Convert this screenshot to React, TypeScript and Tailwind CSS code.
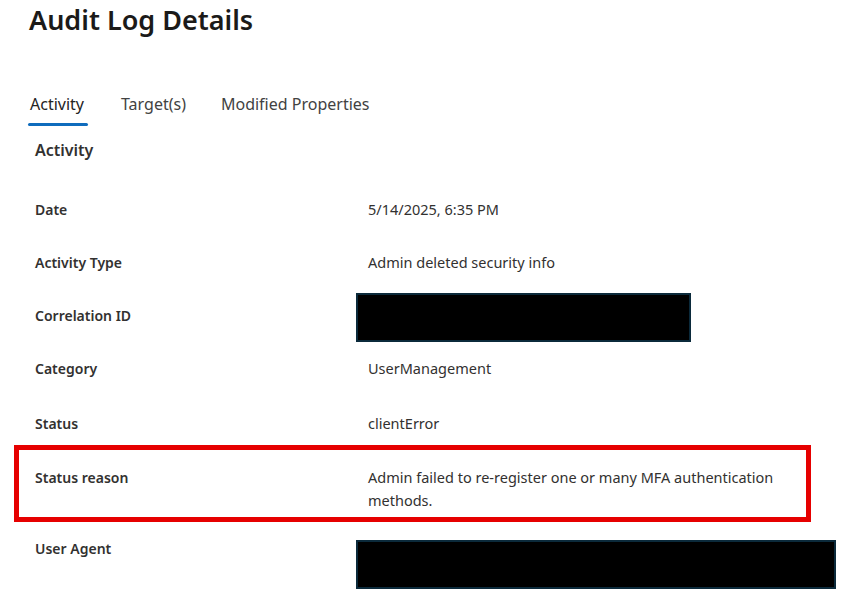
import React from 'react';

const rows: { label: string; value?: string; redact?: 'short' | 'long'; highlight?: boolean; h: string }[] = [
  { label: 'Date', value: '5/14/2025, 6:35 PM', h: 'h-[53px]' },
  { label: 'Activity Type', value: 'Admin deleted security info', h: 'h-[53px]' },
  { label: 'Correlation ID', redact: 'short', h: 'h-[53px]' },
  { label: 'Category', value: 'UserManagement', h: 'h-[55px]' },
  { label: 'Status', value: 'clientError', h: 'h-[54px]' },
  {
    label: 'Status reason',
    value: 'Admin failed to re-register one or many MFA authentication methods.',
    highlight: true,
    h: 'h-[71px]',
  },
  { label: 'User Agent', redact: 'long', h: 'h-[60px]' },
];

export default function App() {
  return (
    <div
      className="w-[851px] h-[598px] overflow-hidden bg-white text-[#242424]"
      style={{ fontFamily: '"Noto Sans", "Open Sans", sans-serif' }}
    >
      <h1 className="pl-[29px] pt-[2px] text-[27px] leading-[36px] font-semibold text-[#1b1a19]">
        Audit Log Details
      </h1>

      {/* tabs */}
      <div className="mt-[55px] pl-[28px] flex items-start text-[16px] leading-[22px]">
        <div className="flex flex-col">
          <span className="px-[2px] text-[#242424]">Activity</span>
          <span className="mt-[8px] h-[3px] w-[60px] rounded-full bg-[#0f6cbd]" />
        </div>
        <span className="ml-[33px] text-[#424242]">Target(s)</span>
        <span className="ml-[35px] text-[#424242]">Modified Properties</span>
      </div>

      <h2 className="pl-[35px] mt-[13px] text-[16px] leading-[22px] font-semibold text-[#323130]">Activity</h2>

      <div className="mt-[22px] text-[14px] text-[#323130]">
        {rows.map((r) => (
          <div
            key={r.label}
            className={`relative flex pl-[35px] ${r.h} ${r.highlight ? 'pt-[15px] leading-[23px]' : 'pt-[16px] leading-[21px]'}`}
          >
            <div className="w-[333px] shrink-0 font-semibold">{r.label}</div>
            <div className="w-[420px] text-[14.5px]">{r.value}</div>
            {r.redact === 'short' && (
              <div className="absolute left-[356px] top-[3.5px] w-[335px] h-[49px] bg-black border-2 border-[#0b2a3b]" />
            )}
            {r.redact === 'long' && (
              <div className="absolute left-[356px] top-[18px] w-[480px] h-[49px] bg-black border-2 border-[#0b2a3b]" />
            )}
            {r.highlight && (
              <div className="absolute left-[14px] top-[-6px] w-[797px] h-[77px] border-[5px] border-[#e60000]" />
            )}
          </div>
        ))}
      </div>
    </div>
  );
}
